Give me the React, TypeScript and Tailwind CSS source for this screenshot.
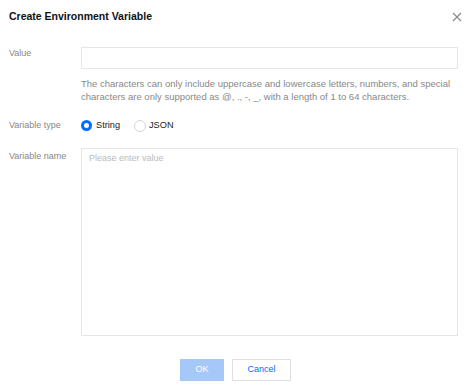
import React from "react";

export default function App() {
  return (
    <div
      className="w-[474px] h-[387px] bg-white relative overflow-hidden"
      style={{ fontFamily: '"Liberation Sans", Arial, sans-serif' }}
    >
      <div className="flex items-center justify-between pl-[9px] pr-[12px] pt-[9px]">
        <div className="text-[10.5px] leading-[14px] font-bold text-[#111]">Create Environment Variable</div>
        <svg width="10" height="10" viewBox="0 0 10 10" className="mt-[1px]">
          <path d="M1 1 L9 9 M9 1 L1 9" stroke="#888" strokeWidth="1.1" />
        </svg>
      </div>

      <div className="pl-[9px] pr-[16px] mt-[24px]">
        <div className="flex">
          <div className="w-[72px] shrink-0 text-[9px] leading-[13px] text-[#888]">Value</div>
          <div className="flex-1">
            <div className="h-[22px] border border-[#e6e6e6] bg-white" />
            <div className="mt-[8px] text-[9.5px] leading-[13px] text-[#888]">
              The characters can only include uppercase and lowercase letters, numbers, and special characters are only supported as @, ., -, _, with a length of 1 to 64 characters.
            </div>
          </div>
        </div>

        <div className="flex mt-[16px] items-center">
          <div className="w-[72px] shrink-0 text-[9px] leading-[13px] text-[#888]">Variable type</div>
          <div className="flex items-center">
            <span className="w-[11px] h-[11px] rounded-full border-[3px] border-[#006eff] bg-white box-border" />
            <span className="ml-[4px] text-[9.2px] leading-[13px] text-[#222]">String</span>
            <span className="ml-[14px] w-[12px] h-[12px] rounded-full border border-[#d6d6d6] bg-white box-border" />
            <span className="ml-[3px] text-[9.2px] leading-[13px] text-[#222]">JSON</span>
          </div>
        </div>

        <div className="flex mt-[16px]">
          <div className="w-[72px] shrink-0 pt-[2px] text-[9px] leading-[13px] text-[#888]">Variable name</div>
          <div className="flex-1 h-[188px] border border-[#e6e6e6] px-[7px] pt-[3px] text-[9px] leading-[13px] text-[#bbb]">
            Please enter value
          </div>
        </div>
      </div>

      <div className="flex justify-center gap-[8px] mt-[23px] pr-[3px]">
        <div className="w-[44px] h-[22px] bg-[#a6c8f8] text-white text-[9px] flex items-center justify-center">OK</div>
        <div className="w-[59px] h-[22px] border border-[#dfdfdf] text-[#006eff] text-[9px] flex items-center justify-center">Cancel</div>
      </div>
    </div>
  );
}
